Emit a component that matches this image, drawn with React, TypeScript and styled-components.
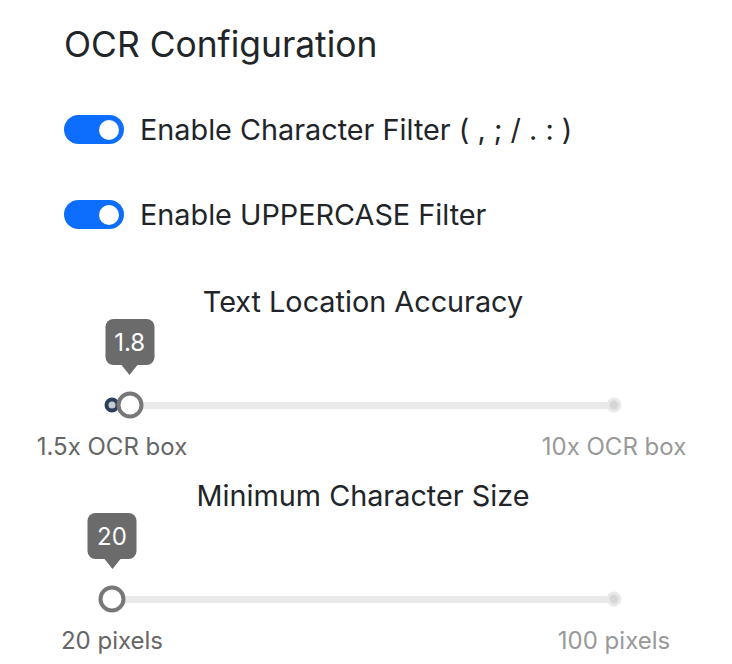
import React from 'react';
import styled, { createGlobalStyle } from 'styled-components';

const Global = createGlobalStyle`
  html, body { margin: 0; padding: 0; background: #fff; }
  body { font-family: Inter, "Noto Sans", sans-serif; color: #212529; }
`;

const Page = styled.div`
  width: 732px;
  height: 664px;
  box-sizing: border-box;
  padding: 25px 0 0 64px;
  display: flex;
  flex-direction: column;
  overflow: hidden;
`;

const Title = styled.h1`
  margin: 0;
  font-size: 35.4px;
  font-weight: 400;
  line-height: 40px;
  white-space: nowrap;
`;

const ToggleList = styled.div`
  display: flex;
  flex-direction: column;
  gap: 56px;
  margin-top: 50px;
`;

const ToggleRow = styled.label`
  display: flex;
  align-items: center;
  gap: 16px;
  height: 29px;
  font-size: 28.8px;
  line-height: 34px;
  white-space: nowrap;
`;

const Switch = styled.span<{ $on: boolean }>`
  flex: none;
  width: 60px;
  height: 29px;
  box-sizing: border-box;
  border-radius: 15px;
  background: ${(p) => (p.$on ? '#0d6efd' : '#dee2e6')};
  display: flex;
  align-items: center;
  justify-content: ${(p) => (p.$on ? 'flex-end' : 'flex-start')};
  padding: 0 5px;
`;

const Knob = styled.span`
  width: 20px;
  height: 20px;
  border-radius: 50%;
  background: #fff;
`;

const Sections = styled.div`
  display: flex;
  flex-direction: column;
  gap: 18px;
  margin-top: 56px;
  margin-left: 48px;
  width: 502px;
`;

const Section = styled.div`
  display: flex;
  flex-direction: column;
`;

const SectionTitle = styled.div`
  font-size: 28.8px;
  line-height: 34px;
  text-align: center;
  white-space: nowrap;
`;

const Area = styled.div`
  position: relative;
  height: 32px;
  margin-top: 70px;
  display: flex;
  align-items: center;
`;

const Rail = styled.div`
  flex: 1;
  height: 7px;
  background: #e9e9e9;
  border-radius: 4px;
`;

const Dot = styled.span<{ $active: boolean }>`
  position: absolute;
  top: 50%;
  width: 15px;
  height: 15px;
  box-sizing: border-box;
  border-radius: 50%;
  transform: translate(-50%, -50%);
  background: ${(p) => (p.$active ? '#c8ccd2' : '#d6d6d6')};
  border: ${(p) => (p.$active ? '4px solid #2c3e5c' : '3px solid #e9e9e9')};
`;

const Thumb = styled.span`
  position: absolute;
  top: 50%;
  width: 27px;
  height: 27px;
  box-sizing: border-box;
  border-radius: 50%;
  background: #fff;
  border: 4px solid #777;
  transform: translate(-50%, -50%);
`;

const Tip = styled.div`
  position: absolute;
  bottom: calc(100% + 24px);
  transform: translateX(-50%);
  width: 49px;
  height: 46px;
  border-radius: 8px;
  background: #6b6b6b;
  color: #fff;
  font-size: 24px;
  display: flex;
  align-items: center;
  justify-content: center;
  &::after {
    content: '';
    position: absolute;
    top: 100%;
    left: 50%;
    margin-left: -8px;
    border-left: 8px solid transparent;
    border-right: 8px solid transparent;
    border-top: 10px solid #6b6b6b;
  }
`;

const Labels = styled.div`
  display: flex;
  justify-content: space-between;
  margin: 12px -90px 0;
`;

const Label = styled.span<{ $active: boolean }>`
  width: 180px;
  text-align: center;
  font-size: 24px;
  line-height: 28px;
  white-space: nowrap;
  color: ${(p) => (p.$active ? '#666' : '#999')};
`;

type SliderProps = {
  title: string;
  min: number;
  max: number;
  value: number;
  minLabel: string;
  maxLabel: string;
};

function Slider({ title, min, max, value, minLabel, maxLabel }: SliderProps) {
  const pct = ((value - min) / (max - min)) * 100;
  return (
    <Section>
      <SectionTitle>{title}</SectionTitle>
      <Area>
        <Rail />
        <Dot $active style={{ left: '0%' }} />
        <Dot $active={false} style={{ left: '100%' }} />
        <Thumb style={{ left: `${pct}%` }} />
        <Tip style={{ left: `${pct}%` }}>{value}</Tip>
      </Area>
      <Labels>
        <Label $active>{minLabel}</Label>
        <Label $active={false}>{maxLabel}</Label>
      </Labels>
    </Section>
  );
}

export default function App() {
  return (
    <>
      <Global />
      <Page>
        <Title>OCR Configuration</Title>
        <ToggleList>
          <ToggleRow>
            <Switch $on><Knob /></Switch>
            Enable Character Filter ( , ; / . : )
          </ToggleRow>
          <ToggleRow>
            <Switch $on><Knob /></Switch>
            Enable UPPERCASE Filter
          </ToggleRow>
        </ToggleList>
        <Sections>
          <Slider title="Text Location Accuracy" min={1.5} max={10} value={1.8} minLabel="1.5x OCR box" maxLabel="10x OCR box" />
          <Slider title="Minimum Character Size" min={20} max={100} value={20} minLabel="20 pixels" maxLabel="100 pixels" />
        </Sections>
      </Page>
    </>
  );
}
